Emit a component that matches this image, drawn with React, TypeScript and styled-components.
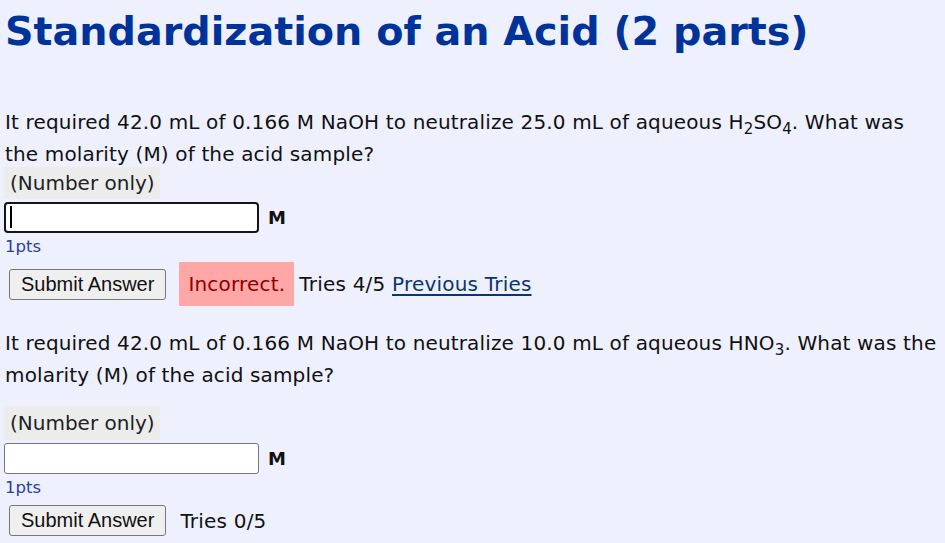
import React from "react";
import styled, { createGlobalStyle } from "styled-components";

const Global = createGlobalStyle`
  html, body { margin: 0; padding: 0; background: #eef0fe; }
  body { font-family: "DejaVu Sans", Verdana, sans-serif; color: #111; }
`;

const Page = styled.div`
  padding: 0 4px;
  background: #eef0fe;
  min-height: 543px;
  box-sizing: border-box;
`;

const Title = styled.h1`
  margin: 0;
  padding-left: 1px;
  height: 64px;
  line-height: 62px;
  font-family: "DejaVu Sans", Verdana, sans-serif;
  font-weight: bold;
  font-size: 39.7px;
  color: #003399;
  white-space: nowrap;
`;

const Question = styled.p<{ $top: number }>`
  margin: ${(p) => p.$top}px 0 0 1px;
  max-width: 935px;
  font-size: 20px;
  letter-spacing: 0.15px;
  line-height: 32px;
  color: #111;
  sub { font-size: 15px; line-height: 0; vertical-align: -5px; }
`;

const Hint = styled.div<{ $top: number; $h: number }>`
  display: inline-block;
  margin-top: ${(p) => p.$top}px;
  height: ${(p) => p.$h}px;
  line-height: ${(p) => p.$h}px;
  padding: 0 5px 0 6px;
  background: #ececec;
  font-size: 20px;
  color: #222;
`;

const InputRow = styled.div`
  display: flex;
  align-items: center;
  gap: 9px;
  margin-top: 3px;
`;

const Field = styled.div`
  position: relative;
  width: 255px;
  height: 31px;
`;

const AnswerInput = styled.input<{ $active?: boolean }>`
  box-sizing: border-box;
  width: 255px;
  height: 31px;
  margin: 0;
  background: #fff;
  border: ${(p) => (p.$active ? "2px solid #141414" : "1px solid #767676")};
  border-radius: ${(p) => (p.$active ? "4px" : "3px")};
  outline: none;
  font-size: 18px;
`;

const Caret = styled.span`
  position: absolute;
  left: 6px;
  top: 4px;
  width: 2px;
  height: 22px;
  background: #000;
`;

const Unit = styled.span`
  font-family: "DejaVu Sans", Verdana, sans-serif;
  font-weight: bold;
  font-size: 18px;
  color: #111;
`;

const Points = styled.div`
  margin: 4px 0 0 1px;
  height: 20px;
  line-height: 20px;
  font-size: 16.5px;
  color: #2a3f9e;
`;

const ActionRow = styled.div<{ $top: number }>`
  display: flex;
  align-items: center;
  margin-top: ${(p) => p.$top}px;
`;

const SubmitButton = styled.button`
  box-sizing: border-box;
  height: 31px;
  margin: 0 0 0 5px;
  padding: 0 11px;
  background: #efefef;
  border: 1px solid #767676;
  border-radius: 3px;
  font-family: "Liberation Sans", Arial, sans-serif;
  font-size: 20px;
  color: #111;
`;

const Incorrect = styled.span`
  display: flex;
  align-items: center;
  height: 44px;
  margin-left: 13px;
  padding: 0 9px;
  background: #ffa6a6;
  color: #8b0000;
  font-size: 20px;
  letter-spacing: 0.2px;
`;

const Tries = styled.span<{ $gap: number }>`
  margin-left: ${(p) => p.$gap}px;
  font-size: 20px;
  letter-spacing: 0.2px;
  color: #111;
`;

const PrevLink = styled.a`
  color: #0a3570;
  text-decoration: underline;
  text-underline-offset: 3px;
  font-size: 20px;
`;

export default function App() {
  return (
    <Page>
      <Global />
      <Title>Standardization of an Acid (2 parts)</Title>

      <Question $top={42}>
        It required 42.0 mL of 0.166 M NaOH to neutralize 25.0 mL of aqueous H<sub>2</sub>SO<sub>4</sub>. What was
        the molarity (M) of the acid sample?
      </Question>
      <Hint $top={-3} $h={32}>(Number only)</Hint>
      <InputRow>
        <Field>
          <AnswerInput $active />
          <Caret />
        </Field>
        <Unit>M</Unit>
      </InputRow>
      <Points>1pts</Points>
      <ActionRow $top={5}>
        <SubmitButton>Submit Answer</SubmitButton>
        <Incorrect>Incorrect.</Incorrect>
        <Tries $gap={5}>
          Tries 4/5 <PrevLink href="#">Previous Tries</PrevLink>
        </Tries>
      </ActionRow>

      <Question $top={21}>
        It required 42.0 mL of 0.166 M NaOH to neutralize 10.0 mL of aqueous HNO<sub>3</sub>. What was the
        molarity (M) of the acid sample?
      </Question>
      <Hint $top={15} $h={34}>(Number only)</Hint>
      <InputRow>
        <Field>
          <AnswerInput />
        </Field>
        <Unit>M</Unit>
      </InputRow>
      <Points>1pts</Points>
      <ActionRow $top={7}>
        <SubmitButton>Submit Answer</SubmitButton>
        <Tries $gap={14}>Tries 0/5</Tries>
      </ActionRow>
    </Page>
  );
}
